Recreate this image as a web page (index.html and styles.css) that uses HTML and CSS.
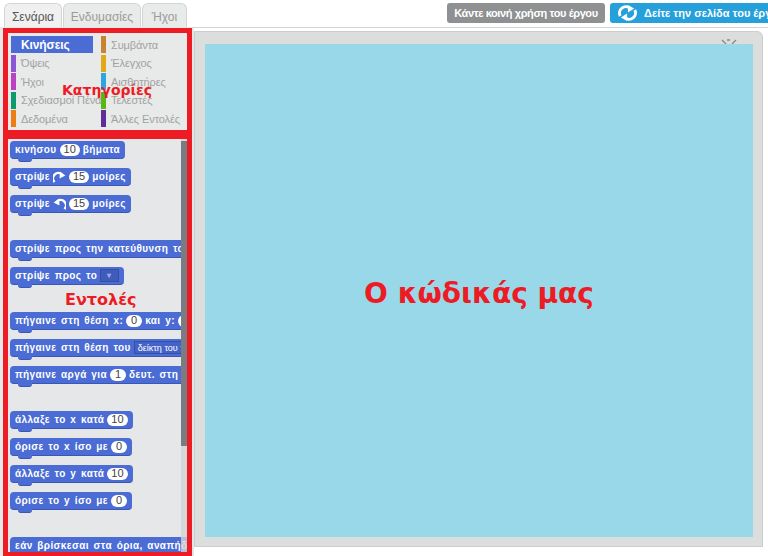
FILE: index.html
```html
<!DOCTYPE html>
<html lang="el">
<head>
<meta charset="utf-8">
<title>Scratch</title>
<link rel="stylesheet" href="styles.css">
</head>
<body>
<div class="page">
  <header class="topbar">
    <nav class="tabs">
      <div class="tab active">Σενάρια</div>
      <div class="tab t2">Ενδυμασίες</div>
      <div class="tab t3">Ήχοι</div>
    </nav>
    <div class="actions">
      <div class="btn gray">Κάντε κοινή χρήση του έργου</div>
      <div class="btn blue">
        <svg class="ico" width="21" height="16" viewBox="0 0 21 16">
          <path d="M3.2 11 A6.3 6.3 0 0 1 13 3.4" fill="none" stroke="#fff" stroke-width="3"/>
          <path d="M10.8 0 L17.2 3.6 L11 7.6 Z" fill="#fff"/>
          <path d="M17.8 5 A6.3 6.3 0 0 1 8 12.6" fill="none" stroke="#fff" stroke-width="3"/>
          <path d="M10.2 16 L3.8 12.4 L10 8.4 Z" fill="#fff"/>
        </svg>
        <span>Δείτε την σελίδα του έργου</span>
      </div>
    </div>
  </header>
  <main class="main">
    <aside class="palette">
      <section class="cats">
        <div class="cat sel"><i style="background:#4a6cd4"></i>Κινήσεις</div>
        <div class="cat"><i style="background:#c88330"></i>Συμβάντα</div>
        <div class="cat"><i style="background:#8a55d7"></i>Όψεις</div>
        <div class="cat"><i style="background:#e1a91a"></i>Έλεγχος</div>
        <div class="cat"><i style="background:#bb42c3"></i>Ήχοι</div>
        <div class="cat"><i style="background:#2ca5e2"></i>Αισθητήρες</div>
        <div class="cat"><i style="background:#0e9a6c"></i>Σχεδιασμοί Πένας</div>
        <div class="cat"><i style="background:#5cb712"></i>Τελεστές</div>
        <div class="cat"><i style="background:#ee7d16"></i>Δεδομένα</div>
        <div class="cat"><i style="background:#632d99"></i>Άλλες Εντολές</div>
        <div class="note note-cats">Κατηγορίες</div>
      </section>
      <section class="blocks">
        <div class="block">κινήσου <span class="num">10</span> βήματα</div>
        <div class="block">στρίψε <svg class="turn" width="13" height="12" viewBox="0 0 13 12"><path d="M1.6 11 A5 5 0 0 1 9 3.6" fill="none" stroke="#fff" stroke-width="2.4"/><path d="M6.8 0.4 L12.4 4.4 L6.6 7.4 Z" fill="#fff"/></svg> <span class="num">15</span> μοίρες</div>
        <div class="block">στρίψε <svg class="turn" width="13" height="12" viewBox="0 0 13 12"><path d="M11.4 11 A5 5 0 0 0 4 3.6" fill="none" stroke="#fff" stroke-width="2.4"/><path d="M6.2 0.4 L0.6 4.4 L6.4 7.4 Z" fill="#fff"/></svg> <span class="num">15</span> μοίρες</div>
        <div class="block gap">στρίψε προς την κατεύθυνση του 90</div>
        <div class="block">στρίψε προς το <span class="drop"><b>▾</b></span></div>
        <div class="block gap">πήγαινε στη θέση x: <span class="num">0</span> και y: <span class="num">0</span></div>
        <div class="block">πήγαινε στη θέση του <span class="menu">δείκτη του ποντικιού</span></div>
        <div class="block">πήγαινε αργά για <span class="num">1</span> δευτ. στη θέση x:</div>
        <div class="block gap">άλλαξε το x κατά <span class="num">10</span></div>
        <div class="block">όρισε το x ίσο με <span class="num">0</span></div>
        <div class="block">άλλαξε το y κατά <span class="num">10</span></div>
        <div class="block">όρισε το y ίσο με <span class="num">0</span></div>
        <div class="block gap">εάν βρίσκεσαι στα όρια, αναπήδησε</div>
        <div class="scroll"><div class="thumb"></div></div>
        <div class="note note-cmds">Εντολές</div>
      </section>
    </aside>
    <section class="stagepane">
      <div class="frame">
        <svg class="zoomico" width="16" height="6" viewBox="0 0 16 6"><path d="M1 1 L5 5 M15 1 L11 5 M6 1 L9 1" stroke="#8a8a8a" stroke-width="1.4" fill="none"/></svg>
        <div class="stage">
          <div class="code-note">Ο κώδικάς μας</div>
        </div>
      </div>
    </section>
  </main>
</div>
</body>
</html>
```

FILE: styles.css
```css
* { box-sizing: border-box; }
html, body { margin: 0; padding: 0; }
body {
  font-family: "Liberation Sans", Arial, sans-serif;
  background: #fff;
  width: 768px;
  height: 556px;
  overflow: hidden;
}
.page { width: 768px; height: 556px; display: flex; flex-direction: column; }

/* top bar */
.topbar {
  height: 27px;
  display: flex;
  align-items: flex-start;
  overflow: hidden;
  flex-shrink: 0;
}
.tabs {
  display: flex;
  gap: 1px;
  padding-left: 4px;
  padding-top: 3px;
  height: 27px;
}
.tab {
  height: 24px;
  width: 58px;
  border: 1px solid #d3d4d4;
  border-bottom: none;
  border-radius: 6px 6px 0 0;
  background: #e9eaea;
  color: #9a9a9a;
  font-size: 12px;
  display: flex;
  align-items: center;
  justify-content: center;
  padding-top: 2px;
}
.tab.active { background: #f0f0f0; color: #555; }
.tab.t2 { width: 78px; }
.tab.t3 { width: 45px; }
.actions {
  margin-left: auto;
  margin-right: -10px;
  display: flex;
  gap: 5px;
  padding-top: 3px;
}
.btn {
  height: 20px;
  border-radius: 3px;
  color: #fff;
  font-size: 11px;
  font-weight: bold;
  letter-spacing: -0.4px;
  display: flex;
  align-items: center;
  white-space: nowrap;
  overflow: hidden;
}
.btn.gray { background: #8e9092; width: 158px; justify-content: center; }
.btn.blue { background: #25a0db; width: 168px; padding-left: 7px; gap: 6px; letter-spacing: 0; }
.ico { display: block; flex-shrink: 0; }

/* main */
.main { flex: 1; display: flex; min-height: 0; }
.palette {
  width: 192px;
  flex-shrink: 0;
  background: #e6e8e8;
  padding: 1px 0 0 3px;
  display: flex;
  flex-direction: column;
}
.cats {
  position: relative;
  height: 107px;
  border: 5px solid #ed1c24;
  background: #e8e9e9;
  padding: 3px 0 0 3px;
  display: grid;
  grid-template-columns: 82px 82px;
  column-gap: 8px;
  grid-auto-rows: 17px;
  row-gap: 1.5px;
}
.cat {
  display: flex;
  align-items: center;
  font-size: 11px;
  letter-spacing: -0.1px;
  color: #a2a2a2;
  white-space: nowrap;
  position: relative;
}
.cat i {
  display: block;
  width: 5px;
  height: 17px;
  margin-right: 5px;
  flex-shrink: 0;
}
.cat:nth-child(even) { z-index: 1; background: #e8e9e9; }
.cat.sel { background: #4a6cd4; color: #fff; font-weight: bold; font-size: 12px; }

.note {
  position: absolute;
  color: #ed1c24;
  font-family: "DejaVu Sans", sans-serif;
  font-weight: bold;
  white-space: nowrap;
  z-index: 5;
}
.note-cats { left: 54px; top: 49px; font-size: 14px; }
.note-cmds { left: 57px; top: 151px; font-size: 16px; }

.blocks {
  position: relative;
  flex: 1;
  border: 5px solid #ed1c24;
  border-top-width: 4px;
  border-bottom-width: 4px;
  background: #e6e7e8;
  padding: 2px 0 0 2px;
  overflow: hidden;
  display: flex;
  flex-direction: column;
  align-items: flex-start;
}
.block {
  position: relative;
  flex-shrink: 0;
  height: 18px;
  margin-bottom: 9px;
  padding: 0 5px 0 5px;
  background: #4a6cd4;
  border-bottom: 1px solid #3a57b5;
  border-radius: 4px;
  color: #fff;
  font-size: 10px;
  font-weight: bold;
  letter-spacing: 0.4px;
  word-spacing: 1.5px;
  white-space: nowrap;
  display: flex;
  align-items: center;
  gap: 3px;
}
.block::after {
  content: "";
  position: absolute;
  left: 8px;
  bottom: -4px;
  width: 14px;
  height: 3px;
  background: #4a6cd4;
  border-bottom: 1px solid #3a57b5;
  border-radius: 0 0 3px 3px;
}
.block.gap { margin-top: 18px; }
.num {
  background: #fff;
  color: #444;
  border-radius: 6px;
  height: 12px;
  min-width: 16px;
  padding: 0 4px;
  font-size: 11px;
  font-weight: normal;
  letter-spacing: 0;
  display: inline-flex;
  align-items: center;
  justify-content: center;
  line-height: 1;
}
.turn { display: block; }
.drop {
  width: 19px;
  height: 13px;
  background: #3f5cbd;
  border: 1px solid #34509f;
  display: inline-flex;
  align-items: center;
  justify-content: center;
  font-size: 8px;
  color: #9fb0e6;
}
.menu {
  height: 13px;
  background: #4463c9;
  border: 1px solid #34509f;
  font-weight: normal;
  letter-spacing: 0;
  word-spacing: 0;
  font-size: 9px;
  padding: 0 3px;
  display: inline-flex;
  align-items: center;
}
.scroll {
  position: absolute;
  right: 0;
  top: 0;
  bottom: 0;
  width: 6px;
  background: rgba(210, 211, 213, 0.8);
}
.thumb {
  height: 305px;
  background: #7b7c82;
  margin-top: 2px;
}

/* stage */
.stagepane {
  flex: 1;
  border-top: 1px solid #d3d4d4;
  padding: 3px 5px 9px 2px;
  display: flex;
  background: linear-gradient(to right, #e4e5e5 0, #e4e5e5 2px, #fff 2px);
}
.frame {
  position: relative;
  flex: 1;
  background: #dcdddd;
  border: 1px solid #cbcccc;
  border-radius: 0 6px 0 0;
  padding: 12px 9px 9px 10px;
  display: flex;
}
.zoomico { position: absolute; right: 25px; top: 7px; }
.stage {
  position: relative;
  flex: 1;
  background: #99d8e9;
  display: flex;
  align-items: center;
  justify-content: center;
}
.code-note {
  color: #ed1c24;
  font-family: "DejaVu Sans", sans-serif;
  font-weight: bold;
  font-size: 28px;
  margin-top: 6px;
}
```
